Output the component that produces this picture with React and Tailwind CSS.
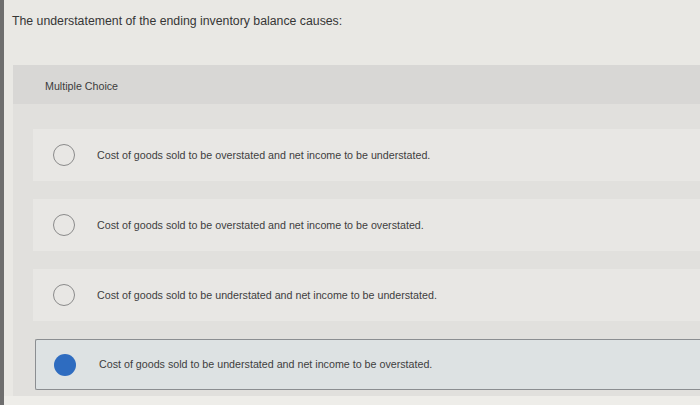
export default function App() {
  const options = [
    'Cost of goods sold to be overstated and net income to be understated.',
    'Cost of goods sold to be overstated and net income to be overstated.',
    'Cost of goods sold to be understated and net income to be understated.',
    'Cost of goods sold to be understated and net income to be overstated.',
  ];
  const selected = 3;

  return (
    <div
      className="w-[700px] h-[405px] flex bg-[#e9e8e4] overflow-hidden"
      style={{ fontFamily: '"Liberation Sans", Arial, sans-serif' }}
    >
      {/* left edge */}
      <div className="w-[4px] h-full bg-[#6e6e6e]"></div>

      <div className="flex-1 flex flex-col">
        {/* question */}
        <div className="h-[65px] pl-[8px] pt-[13px]">
          <p className="text-[12.3px] text-[#363636] leading-[16px]">
            The understatement of the ending inventory balance causes:
          </p>
        </div>

        {/* panel */}
        <div className="ml-[9px] flex-1 flex flex-col bg-[#e1e0dd]">
          <div className="h-[39px] bg-[#d8d7d5] flex items-center pl-[32px] pt-[3px]">
            <span className="text-[10.7px] text-[#3c3c3c]">Multiple Choice</span>
          </div>

          <div className="flex flex-col gap-[18px] pt-[25px] pl-[20px]">
            {options.map((opt, i) =>
              i === selected ? (
                <div
                  key={i}
                  className="h-[51px] ml-[2px] flex items-center bg-[#dde2e3] border-[1.5px] border-r-0 border-[#8b8e91] rounded-l-[2px]"
                >
                  <div className="w-[22px] h-[22px] rounded-full bg-[#2e6cc0] ml-[18px]"></div>
                  <span className="ml-[23px] text-[10.7px] text-[#3e3e3e]">{opt}</span>
                </div>
              ) : (
                <div key={i} className="h-[52px] flex items-center bg-[#e8e7e4]">
                  <div className="w-[22px] h-[22px] rounded-full border-[1.3px] border-[#8a8a8a] ml-[20px]"></div>
                  <span className="ml-[22px] text-[10.7px] text-[#3e3e3e]">{opt}</span>
                </div>
              )
            )}
          </div>
          <div className="flex-1"></div>
          <div className="h-[9px] bg-[#eeede9] -ml-[9px]"></div>
        </div>
      </div>
    </div>
  );
}
